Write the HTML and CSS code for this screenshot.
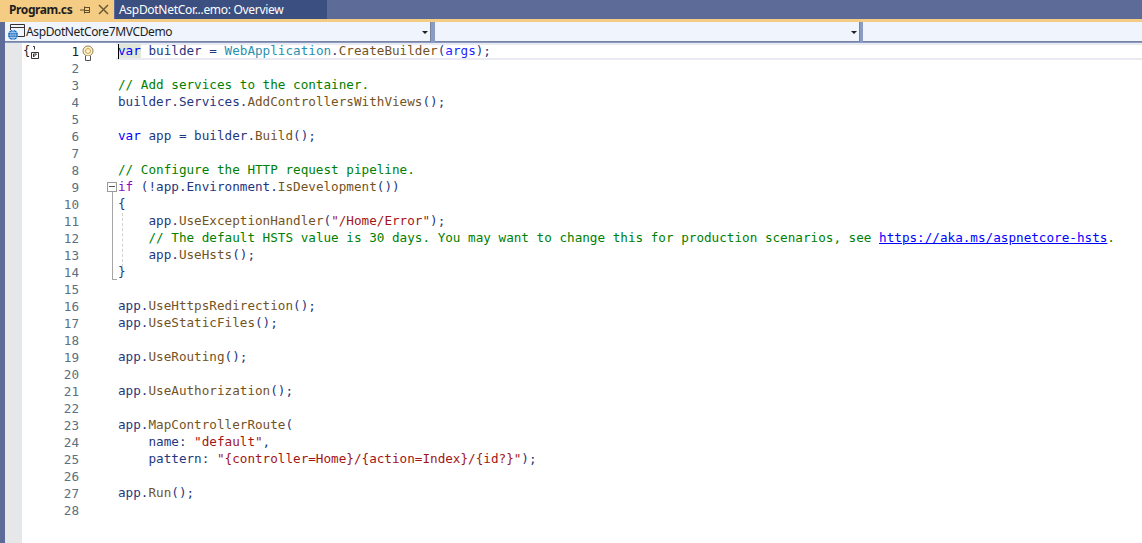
FILE: index.html
```html
<!DOCTYPE html>
<html lang="en">
<head>
<meta charset="utf-8">
<title>Program.cs</title>
<link rel="stylesheet" href="styles.css">
</head>
<body>
<div class="window">
  <div class="tabstrip">
    <div class="tab active">
      <span class="tab-title">Program.cs</span>
      <svg class="pin" width="12" height="12" viewBox="0 0 12 12"><path d="M1 6h4M5.500 2.500v7M5.500 3.500h5v5h-5M10.500 3v6M5.500 6.500h5" fill="none" stroke="#5f4f2b" stroke-width="1"/></svg>
      <svg class="close" width="11" height="11" viewBox="0 0 11 11"><path d="M1 1l9 9M10 1l-9 9" stroke="#6b5a33" stroke-width="1.500"/></svg>
    </div>
    <div class="tab inactive"><span class="inactive-title">AspDotNetCor...emo: Overview</span></div>
  </div>
  <div class="accent"></div>
  <div class="navbar">
    <div class="combo first">
      <svg class="project" width="19" height="18" viewBox="0 0 19 18">
        <path d="M3.500 7V1.500h14v12H11" fill="#f0f4fc" stroke="#333" stroke-width="1"/>
        <path d="M3.500 4.500h14" stroke="#333" stroke-width="1"/>
        <circle cx="6" cy="12" r="5" fill="#1668c0"/>
        <path d="M1 12h10M6 7v10M2 9.500h8M2 14.500h8" fill="none" stroke="#cfe3f7" stroke-width=".6"/>
        <path d="M6 7c-3 3-3 7 0 10M6 7c3 3 3 7 0 10" fill="none" stroke="#cfe3f7" stroke-width=".6"/>
      </svg>
      <span class="combo-text">AspDotNetCore7MVCDemo</span>
      <span class="arrow"></span>
    </div>
    <div class="combo second"><span class="arrow"></span></div>
    <div class="combo third"></div>
  </div>
  <div class="editor">
    <div class="glyphs">
      <svg class="scope" width="20" height="17" viewBox="0 0 20 17">
        <text x="0" y="11.500" class="brace">{</text>
        <path d="M10 3.500h1.500v3" fill="none" stroke="#333"/>
        <path d="M8.500 9.500h7v6h-7z" fill="#fff" stroke="#333"/>
        <path d="M10.500 14v-3h3M13.500 11l-3 3" fill="none" stroke="#333"/>
      </svg>
    </div>
    <div class="numbers">
      <div class="num current">1</div><div class="num">2</div><div class="num">3</div><div class="num">4</div><div class="num">5</div><div class="num">6</div><div class="num">7</div><div class="num">8</div><div class="num">9</div><div class="num">10</div><div class="num">11</div><div class="num">12</div><div class="num">13</div><div class="num">14</div><div class="num">15</div><div class="num">16</div><div class="num">17</div><div class="num">18</div><div class="num">19</div><div class="num">20</div><div class="num">21</div><div class="num">22</div><div class="num">23</div><div class="num">24</div><div class="num">25</div><div class="num">26</div><div class="num">27</div><div class="num">28</div>
    </div>
    <div class="margin">
      <svg class="bulb" width="14" height="17" viewBox="0 0 14 17">
        <circle cx="7" cy="6" r="5" fill="#fff3cf" stroke="#8f7f55"/>
        <circle cx="7" cy="6" r="2.500" fill="none" stroke="#c9a24a"/>
        <path d="M4.500 11v4.500h5V11" fill="#fff" stroke="#555"/>
      </svg>
      <div class="fold-box"><span class="fold-minus"></span></div>
      <div class="fold-line"></div>
    </div>
    <div class="code">
      <div class="guide"></div>
      <div class="line current"><span class="caret"></span><span class="kw sel">var</span> builder = <span class="type">WebApplication</span>.<span class="fn">CreateBuilder</span>(<span class="param">args</span>);</div>
      <div class="line"></div>
      <div class="line"><span class="cm">// Add services to the container.</span></div>
      <div class="line">builder.Services.<span class="fn">AddControllersWithViews</span>();</div>
      <div class="line"></div>
      <div class="line"><span class="kw">var</span> app = builder.<span class="fn">Build</span>();</div>
      <div class="line"></div>
      <div class="line"><span class="cm">// Configure the HTTP request pipeline.</span></div>
      <div class="line"><span class="ctl">if</span> (!app.Environment.<span class="fn">IsDevelopment</span>())</div>
      <div class="line">{</div>
      <div class="line">    app.<span class="fn">UseExceptionHandler</span>(<span class="str">"/Home/Error"</span>);</div>
      <div class="line">    <span class="cm">// The default HSTS value is 30 days. You may want to change this for production scenarios, see <a class="link" href="#">https://aka.ms/aspnetcore-hsts</a>.</span></div>
      <div class="line">    app.<span class="fn">UseHsts</span>();</div>
      <div class="line">}</div>
      <div class="line"></div>
      <div class="line">app.<span class="fn">UseHttpsRedirection</span>();</div>
      <div class="line">app.<span class="fn">UseStaticFiles</span>();</div>
      <div class="line"></div>
      <div class="line">app.<span class="fn">UseRouting</span>();</div>
      <div class="line"></div>
      <div class="line">app.<span class="fn">UseAuthorization</span>();</div>
      <div class="line"></div>
      <div class="line">app.<span class="fn">MapControllerRoute</span>(</div>
      <div class="line">    name: <span class="str">"default"</span>,</div>
      <div class="line">    pattern: <span class="str">"{controller=Home}/{action=Index}/{id?}"</span>);</div>
      <div class="line"></div>
      <div class="line">app.<span class="fn">Run</span>();</div>
      <div class="line"></div>
    </div>
  </div>
</div>
</body>
</html>
```
FILE: styles.css
```css
* { box-sizing: border-box; }
html, body { margin: 0; height: 100%; overflow: hidden; }
body { background: #fff; font-family: "Noto Sans", "Open Sans", sans-serif; }
.window { width: 1142px; height: 543px; display: flex; flex-direction: column; background: #5d6b99; }
.tabstrip { height: 19px; display: flex; align-items: stretch; }
.tab { display: flex; align-items: center; font-size: 12px; white-space: nowrap; }
.tab.active { width: 114px; background: #f5cc84; padding-left: 9px; color: #1e1e1e; font-weight: 700; }
.tab-title { width: 70px; letter-spacing: -.4px; }
.close { margin-left: 7px; }
.tab.inactive { width: 212px; margin-left: 1px; background: #3b4f81; color: #fff; padding-left: 4px; }
.inactive-title { letter-spacing: -.3px; }
.accent { height: 3px; background: #f5cc84; }
.navbar { height: 21px; display: flex; background: #8a9bc4; margin-left: 5px; }
.combo { position: relative; height: 20px; background: #f0f4fc; border-bottom: 1px solid #7a84a0; border-right: 1px solid #7a84a0; display: flex; align-items: center; font-size: 12px; color: #1e1e1e; }
.combo.first { width: 426px; padding-left: 2px; }
.combo.second { width: 425px; margin-left: 4px; }
.combo.third { flex: 1; margin-left: 3px; border-right: 0; }
.project { flex: none; margin-top: 1px; }
.combo-text { letter-spacing: -.38px; }
.arrow { position: absolute; right: 2px; top: 9px; width: 0; height: 0; border-left: 3px solid transparent; border-right: 3px solid transparent; border-top: 3px solid #1e1e1e; }
.editor { flex: 1; display: flex; margin-left: 5px; background: #fff; font-family: "DejaVu Sans Mono", monospace; font-size: 12.65px; line-height: 15px; overflow: hidden; }
.glyphs { width: 17px; background: #e6e7e8; flex: none; position: relative; }
.scope { position: absolute; left: 18px; top: 0; }
.brace { font-family: "DejaVu Sans Mono", monospace; font-size: 12px; fill: #222; }
.numbers { width: 57px; padding-top: 1px; flex: none; text-align: right; color: #5b7080; }
.num { height: 17px; }
.num.current { color: #1e1e1e; }
.margin { width: 39px; flex: none; position: relative; }
.bulb { position: absolute; left: 2px; top: 2px; }
.fold-box { position: absolute; left: 28px; top: 139px; width: 10px; height: 10px; border: 1px solid #9a9a9a; background: #fff; }
.fold-minus { display: block; margin: 3px 1px 0; height: 1px; background: #555; }
.fold-line { position: absolute; left: 33px; top: 149px; width: 5px; height: 88px; border-left: 1px solid #a5a5a5; border-bottom: 1px solid #a5a5a5; }
.code { flex: 1; position: relative; color: #1f377f; }
.line { height: 17px; white-space: pre; }
.line.current { position: relative; margin-left: -2px; padding-left: 2px; box-shadow: inset 0 2px 0 #eaeaf2, inset 0 -2px 0 #eaeaf2; }
.caret { position: absolute; left: 2px; top: 1px; width: 1px; height: 15px; background: #000; }
.guide { position: absolute; left: 4px; top: 170px; height: 54px; border-left: 1px dashed #d0d0d0; }
.kw { color: #0000ff; }
.sel { background: #e0e6d8; display: inline-block; height: 14px; margin-top: 1px; line-height: 14px; vertical-align: top; }
.ctl { color: #8f08c4; }
.type { color: #2b91af; }
.fn { color: #74531f; }
.param { color: #1f1fff; }
.cm { color: #008000; }
.str { color: #a31515; }
.link { color: #0000ff; text-decoration: underline; }
```
